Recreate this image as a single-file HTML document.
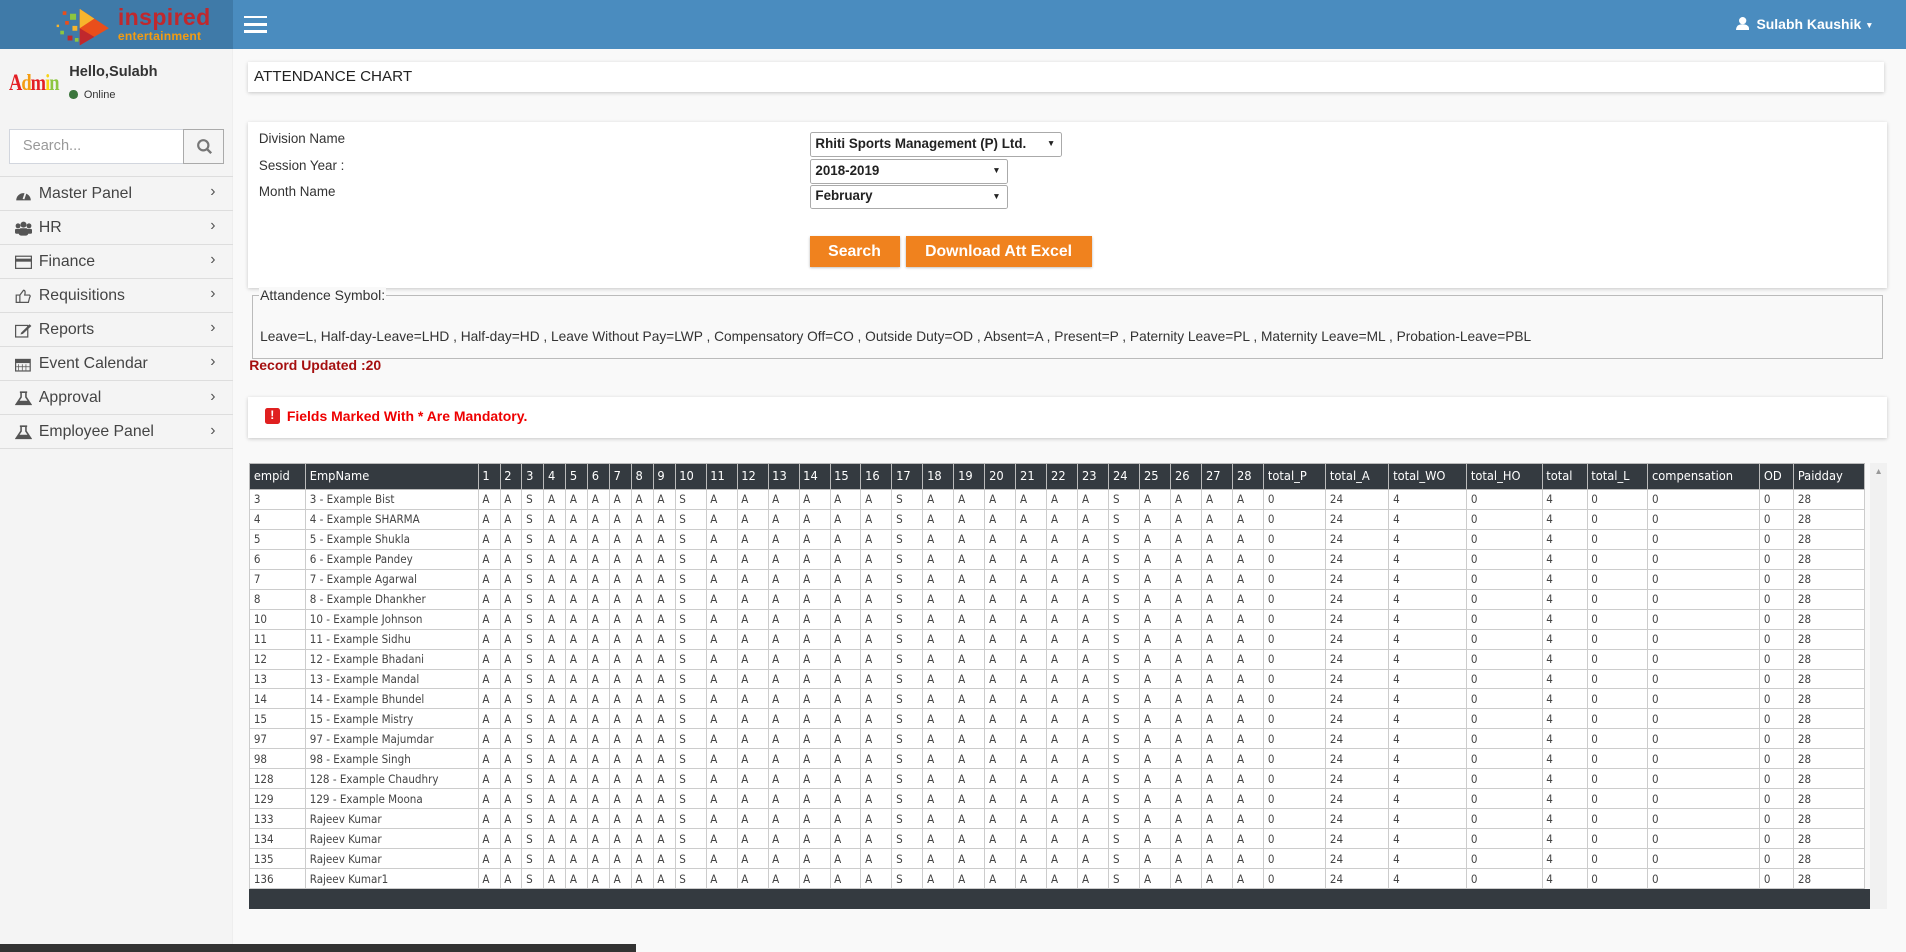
<!DOCTYPE html>
<html><head><meta charset="utf-8">
<style>
html{zoom:1.21556}
*{box-sizing:border-box;margin:0;padding:0}
body{width:1568px;height:783px;overflow:hidden;background:#f9f9f9;font-family:"Liberation Sans",Arial,sans-serif;color:#333;position:relative}
.hdr{position:absolute;left:0;top:0;width:1568px;height:40px;background:#4a8cbf}
.hdrl{position:absolute;left:0;top:0;width:192px;height:40px;background:#3f7aa8}
.logo1{position:absolute;left:97px;top:3px;color:#c0282d;font-weight:bold;font-size:19px;letter-spacing:.3px}
.logo2{position:absolute;left:97px;top:24px;color:#f39c12;font-size:10px;font-weight:bold;letter-spacing:.2px}
.ham{position:absolute;left:201px;top:13px;width:19px}
.ham i{display:block;height:2px;background:#fff;margin-bottom:4px}
.user{position:absolute;left:1428px;top:13px;color:#fff;font-size:11.5px;font-weight:bold}
.side{position:absolute;left:0;top:40px;width:192px;height:743px;background:#f4f4f4;border-right:1px solid #eee}
.hello{position:absolute;left:57px;top:53px;font-size:12px;font-weight:bold;color:#333}
.online{position:absolute;left:57px;top:73px;font-size:9px;color:#333}
.online b{display:inline-block;width:7px;height:7px;border-radius:50%;background:#3c763d;margin-right:5px;vertical-align:-1px}
.admin{position:absolute;left:7px;top:57px;font-family:"Liberation Serif",serif;font-size:19px;font-weight:bold;letter-spacing:-1px;transform:scaleX(.8);transform-origin:left}
.srch{position:absolute;left:7px;top:106px;width:177px;height:29px;border:1px solid #d2d6de;background:#fff}
.srch span{position:absolute;left:11px;top:7px;font-size:12px;color:#999}
.srch .btn{position:absolute;right:-1px;top:-1px;width:34px;height:29px;border:1px solid #aaa;background:#f4f4f4}
.menu{position:absolute;left:0;top:145px;width:192px}
.mi{height:28px;border-top:1px solid #ddd;position:relative;font-size:13px;color:#444}
.mi:last-child{border-bottom:1px solid #ddd}
.mi .t{position:absolute;left:32px;top:6px}
.mi .ic{position:absolute;left:12px;top:8px;width:14px;height:12px;color:#555}
.mi .ch{position:absolute;left:173px;top:5px;font-size:13px;color:#555}
.pan{position:absolute;background:#fff;box-shadow:0 1px 3px rgba(0,0,0,.2)}
.lbl{position:absolute;left:213px;font-size:11px;color:#333}
.sel{position:absolute;left:666px;height:20px;border:1px solid #aaa;background:#fff;font-size:11px;font-weight:bold;color:#222;padding:2px 4px;border-radius:2px}
.sel:after{content:"▼";position:absolute;right:5px;top:4px;font-size:7px}
.obtn{position:absolute;top:194px;height:26px;background:#f0821e;color:#fff;font-weight:bold;font-size:13px;text-align:center;line-height:26px;box-shadow:0 1px 2px rgba(0,0,0,.3)}
.fs{position:absolute;left:207px;top:243px;width:1342px;height:52px;border:1px solid #bbb}
.leg{position:absolute;left:213px;top:236px;background:#f9f9f9;font-size:11.5px;color:#333;padding:0 1px}
.sym{position:absolute;left:214px;top:271px;font-size:11.3px;color:#333}
.rec{position:absolute;left:205px;top:294px;font-size:11.5px;font-weight:bold;color:#a50f0f}
table{position:absolute;left:205px;top:381px;border-collapse:collapse;table-layout:fixed;width:1329px;font-family:"DejaVu Sans Condensed","Liberation Sans",sans-serif}
th{background:#343a40;color:#fff;font-size:10.5px;font-weight:normal;text-align:left;padding:0 3px;height:21px;border:1px solid #bbb;white-space:nowrap;overflow:hidden}
td{font-size:9.5px;color:#444;padding:0 3px;height:16.45px;border:1px solid #ccc;background:#fff;white-space:nowrap;overflow:hidden}
.foot{position:absolute;left:205px;top:731px;width:1333px;height:17px;background:#343a40}
.sb{position:absolute;left:1538px;top:381px;width:14px;height:367px;background:#f1f1f1}
</style></head><body>
<div class="hdr"><div class="hdrl"></div>
<svg style="position:absolute;left:44px;top:3px" width="50" height="36" viewBox="0 0 50 36">
<polygon points="22,4 46,20 22,34" fill="#e94e1b"/><polygon points="22,4 34,12 22,20" fill="#f7b52c"/><polygon points="22,20 34,27 22,34" fill="#c0282d"/>
<rect x="14" y="8" width="5" height="5" fill="#8dc63f"/><rect x="16" y="18" width="4" height="4" fill="#f7b52c"/><rect x="10" y="14" width="3" height="3" fill="#e94e1b"/><rect x="6" y="22" width="3" height="3" fill="#8dc63f"/><rect x="12" y="26" width="4" height="4" fill="#c0282d"/><rect x="3" y="17" width="2" height="2" fill="#f7b52c"/><rect x="18" y="28" width="3" height="3" fill="#8dc63f"/><rect x="8" y="6" width="3" height="3" fill="#e94e1b"/>
</svg>
<div class="logo1">inspired</div><div class="logo2">entertainment</div>
<div class="ham"><i></i><i></i><i></i></div>
<div class="user"><svg width="11" height="11" viewBox="0 0 11 11" style="vertical-align:-1px;margin-right:6px"><circle cx="5.5" cy="3" r="3" fill="#fff"/><path d="M0 11 Q0 6 5.5 6 Q11 6 11 11Z" fill="#fff"/></svg>Sulabh Kaushik <span style="font-size:7px;vertical-align:1px">▼</span></div>
</div>
<div class="side">
</div>
<div class="admin"><span style="color:#e31e24">A</span><span style="color:#f39c12">d</span><span style="color:#e31e24">m</span><span style="color:#f7d417">i</span><span style="color:#8dc63f">n</span></div>
<div class="hello">Hello,Sulabh</div>
<div class="online"><b></b>Online</div>
<div class="srch"><span>Search...</span><div class="btn"><svg width="14" height="14" viewBox="0 0 14 14" style="position:absolute;left:10px;top:7px"><circle cx="6" cy="6" r="4.2" fill="none" stroke="#777" stroke-width="1.8"/><path d="M9 9 L12.5 12.5" stroke="#777" stroke-width="2"/></svg></div></div>
<div class="menu">
<div class="mi"><svg class="ic" viewBox="0 0 14 12"><path d="M1 11 A6 6 0 1 1 13 11Z" fill="#555"/><path d="M7 10 L9 4" stroke="#f4f4f4" stroke-width="1.5"/></svg><span class="t">Master Panel</span><span class="ch">›</span></div>
<div class="mi"><svg class="ic" viewBox="0 0 14 12"><circle cx="7" cy="3" r="2.5" fill="#555"/><circle cx="2.5" cy="4" r="2" fill="#555"/><circle cx="11.5" cy="4" r="2" fill="#555"/><rect x="3" y="6" width="8" height="6" rx="2" fill="#555"/><rect x="0" y="6.5" width="4" height="4" rx="1" fill="#555"/><rect x="10" y="6.5" width="4" height="4" rx="1" fill="#555"/></svg><span class="t">HR</span><span class="ch">›</span></div>
<div class="mi"><svg class="ic" viewBox="0 0 14 12"><rect x=".5" y="1" width="13" height="10" fill="none" stroke="#555"/><rect x="0" y="3" width="14" height="2.5" fill="#555"/></svg><span class="t">Finance</span><span class="ch">›</span></div>
<div class="mi"><svg class="ic" viewBox="0 0 14 12"><path d="M1 5 H4 V11 H1Z M4 5 L7 1 Q9 1 8 5 H12 Q13 6 12 7 L11 11 H4" fill="none" stroke="#555"/></svg><span class="t">Requisitions</span><span class="ch">›</span></div>
<div class="mi"><svg class="ic" viewBox="0 0 14 12"><rect x=".5" y="2" width="10" height="9.5" fill="none" stroke="#555"/><path d="M5 8 L12 1 L13.5 2.5 L6.5 9 L4.5 9.5Z" fill="#555"/></svg><span class="t">Reports</span><span class="ch">›</span></div>
<div class="mi"><svg class="ic" viewBox="0 0 14 12"><rect x=".5" y="2" width="12" height="9.5" fill="none" stroke="#555"/><rect x=".5" y="2" width="12" height="3" fill="#555"/><path d="M3 6V11M6 6V11M9 6V11M1 8H12" stroke="#555" stroke-width=".6"/></svg><span class="t">Event Calendar</span><span class="ch">›</span></div>
<div class="mi"><svg class="ic" viewBox="0 0 14 12"><path d="M4 1H10M5 1V5L1 11H13L9 5V1" fill="none" stroke="#555" stroke-width="1.3"/><path d="M3 8H11L13 11H1Z" fill="#555"/></svg><span class="t">Approval</span><span class="ch">›</span></div>
<div class="mi"><svg class="ic" viewBox="0 0 14 12"><path d="M4 1H10M5 1V5L1 11H13L9 5V1" fill="none" stroke="#555" stroke-width="1.3"/><path d="M3 8H11L13 11H1Z" fill="#555"/></svg><span class="t">Employee Panel</span><span class="ch">›</span></div>
</div>

<div class="pan" style="left:204px;top:51px;width:1346px;height:25px"><span style="position:absolute;left:5px;top:5px;font-size:12.5px;color:#222">ATTENDANCE CHART</span></div>
<div class="pan" style="left:204px;top:100px;width:1348px;height:137px"></div>
<div class="lbl" style="top:108px">Division Name</div>
<div class="lbl" style="top:130px">Session Year :</div>
<div class="lbl" style="top:151px">Month Name</div>
<div class="sel" style="top:109px;width:208px">Rhiti Sports Management (P) Ltd.</div>
<div class="sel" style="top:131px;width:163px">2018-2019</div>
<div class="sel" style="top:152px;width:163px">February</div>
<div class="obtn" style="left:666px;width:74px">Search</div>
<div class="obtn" style="left:745px;width:153px">Download Att Excel</div>
<div class="fs"></div>
<div class="leg">Attandence Symbol:</div>
<div class="sym">Leave=L, Half-day-Leave=LHD , Half-day=HD , Leave Without Pay=LWP , Compensatory Off=CO , Outside Duty=OD , Absent=A , Present=P , Paternity Leave=PL , Maternity Leave=ML , Probation-Leave=PBL</div>
<div class="rec">Record Updated :20</div>
<div class="pan" style="left:204px;top:327px;width:1348px;height:33px"><span style="position:absolute;left:14px;top:9px;width:12px;height:13px;background:#e02020;border-radius:2px;color:#fff;font-size:10px;font-weight:bold;text-align:center;line-height:13px">!</span><span style="position:absolute;left:32px;top:9px;font-size:11.5px;font-weight:bold;color:#e00">Fields Marked With * Are Mandatory.</span></div>

<div class="sb"><span style="position:absolute;left:4px;top:2px;font-size:7px;color:#999">▲</span></div>
<table id="t"></table>
<div class="foot"></div>
<div style="position:absolute;left:0;top:777px;width:523px;height:6px;background:#333"></div>
<script>
var w=[46,142,18,18,18,18,18,18,18,18,18];for(var i=10;i<=28;i++)w.push(25.5);w=w.concat([51,52,64,62,37,50,92,28,58]);
var h=['empid','EmpName'];for(i=1;i<=28;i++)h.push(i);h=h.concat(['total_P','total_A','total_WO','total_HO','total','total_L','compensation','OD','Paidday']);
var s='<colgroup>';w.forEach(function(x){s+='<col style="width:'+x+'px">'});s+='</colgroup><tr>';h.forEach(function(x){s+='<th>'+x+'</th>'});s+='</tr>';
var r=[[3,'3 - Example Bist'],[4,'4 - Example SHARMA'],[5,'5 - Example Shukla'],[6,'6 - Example Pandey'],[7,'7 - Example Agarwal'],[8,'8 - Example Dhankher'],[10,'10 - Example Johnson'],[11,'11 - Example Sidhu'],[12,'12 - Example Bhadani'],[13,'13 - Example Mandal'],[14,'14 - Example Bhundel'],[15,'15 - Example Mistry'],[97,'97 - Example Majumdar'],[98,'98 - Example Singh'],[128,'128 - Example Chaudhry'],[129,'129 - Example Moona'],[133,'Rajeev Kumar'],[134,'Rajeev Kumar'],[135,'Rajeev Kumar'],[136,'Rajeev Kumar1']];
r.forEach(function(x){s+='<tr><td>'+x[0]+'</td><td>'+x[1]+'</td>';for(var d=1;d<=28;d++)s+='<td>'+(d%7==3?'S':'A')+'</td>';[0,24,4,0,4,0,0,0,28].forEach(function(v){s+='<td>'+v+'</td>'});s+='</tr>'});
document.getElementById('t').innerHTML=s;
</script>
</body></html>
